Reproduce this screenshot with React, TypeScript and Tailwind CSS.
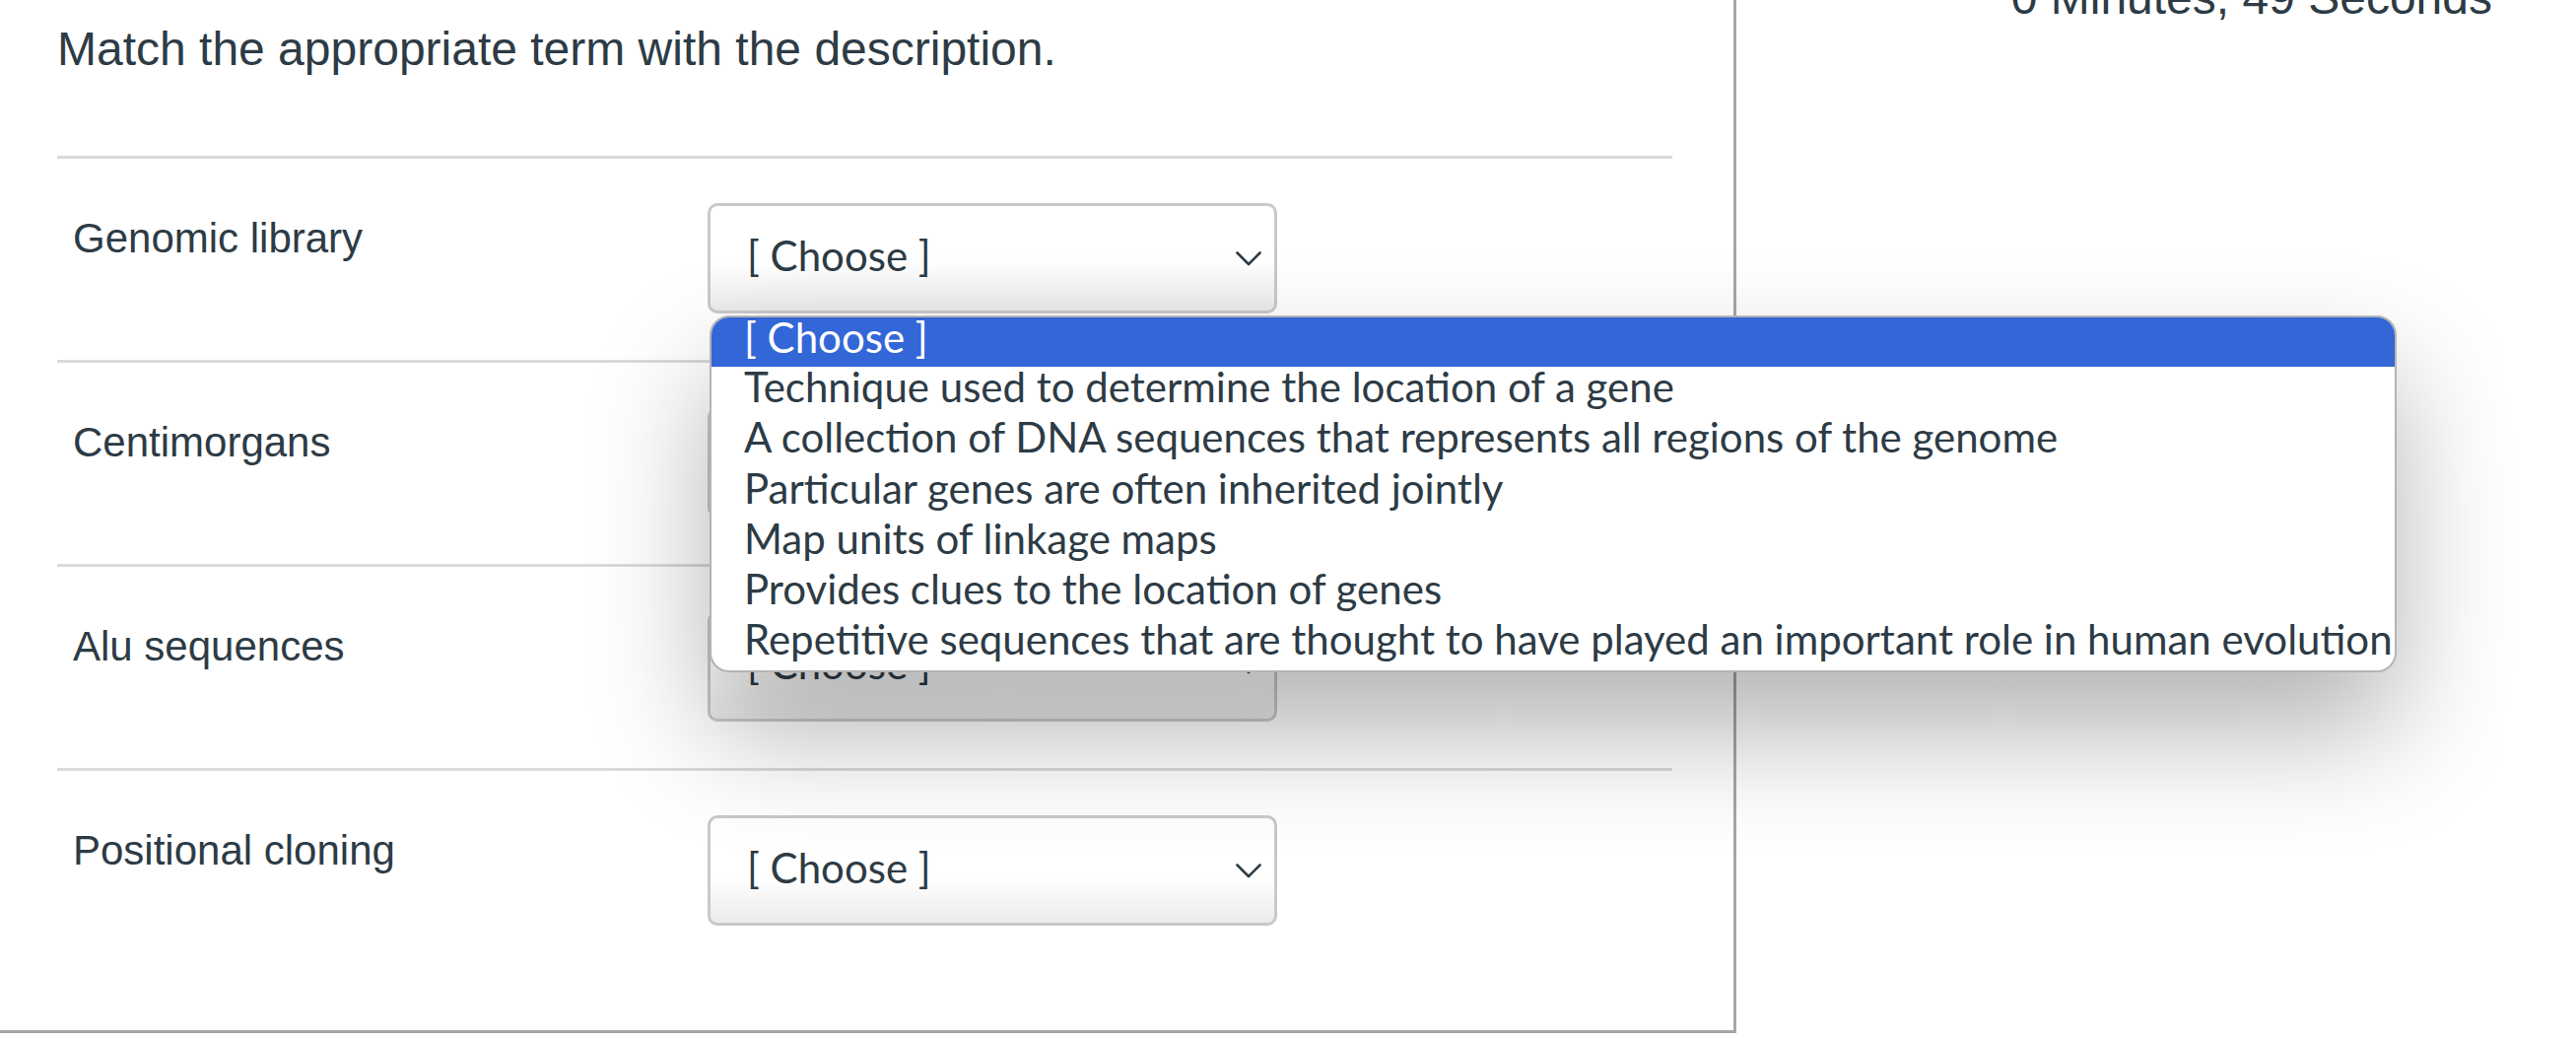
import React from "react";

const terms = ["Genomic library", "Centimorgans", "Alu sequences", "Positional cloning"];

const options = [
  "[ Choose ]",
  "Technique used to determine the location of a gene",
  "A collection of DNA sequences that represents all regions of the genome",
  "Particular genes are often inherited jointly",
  "Map units of linkage maps",
  "Provides clues to the location of genes",
  "Repetitive sequences that are thought to have played an important role in human evolution",
];

function Chevron() {
  return (
    <svg width="26" height="15" viewBox="0 0 26 15" fill="none">
      <path d="M1.5 1.5 L13 13 L24.5 1.5" stroke="#2d3b45" strokeWidth="2.6" strokeLinecap="round" strokeLinejoin="round" />
    </svg>
  );
}

function FakeSelect() {
  return (
    <div className="flex h-[112px] w-[578px] items-center justify-between rounded-[10px] border-[3px] border-[#c9c9c9] bg-gradient-to-b from-white from-55% to-[#ebebeb] pl-[37px] pr-[13px]">
      <span className="pb-[6px] font-['Lato',sans-serif] text-[42px] leading-[42px] text-[#2d3b45]">[ Choose ]</span>
      <Chevron />
    </div>
  );
}

function MatchRow({ term }: { term: string }) {
  return (
    <div className="flex border-t-[3px] border-[#dadada] pt-[45px] pb-[47px]">
      <div className="w-[660px] shrink-0 pl-[16px] pt-[15px] text-[42px] leading-[42px] text-[#2d3b45]">{term}</div>
      <FakeSelect />
    </div>
  );
}

export default function App() {
  return (
    <div className="relative flex h-[1058px] w-[2614px] overflow-hidden bg-white font-['Liberation_Sans',Arial,sans-serif]">
      <div className="h-[1048px] w-[1762px] shrink-0 border-r-[3px] border-b-[3px] border-[#a6a6a6] pl-[58px] pr-[62px]">
        <h1 className="pt-[26px] text-[48px] leading-[48px] font-normal text-[#2d3b45]">
          Match the appropriate term with the description.
        </h1>
        <div className="mt-[84px]">
          {terms.map((term) => (
            <MatchRow key={term} term={term} />
          ))}
        </div>
      </div>

      <div className="flex-1">
        <div className="mt-[-26px] pr-[85px] text-right text-[48px] leading-[48px] text-[#2d3b45]">
          0 Minutes, 49 Seconds
        </div>
      </div>

      {/* open native-looking select popup */}
      <div className="absolute left-[720px] top-[320px] w-[1712px] overflow-hidden rounded-[20px] border-2 border-[#b4b4b4] bg-white shadow-[0_60px_120px_rgba(0,0,0,0.3)]">
        {options.map((option, index) => (
          <div
            key={option}
            className={
              index === 0
                ? "h-[50px] whitespace-nowrap bg-[#3366d6] pl-[33px] font-['Lato',sans-serif] text-[42px] leading-[40px] text-white"
                : "h-[51.3px] whitespace-nowrap pl-[33px] font-['Lato',sans-serif] text-[42px] leading-[40px] text-[#2d3b45]"
            }
          >
            {option}
          </div>
        ))}
      </div>
    </div>
  );
}
